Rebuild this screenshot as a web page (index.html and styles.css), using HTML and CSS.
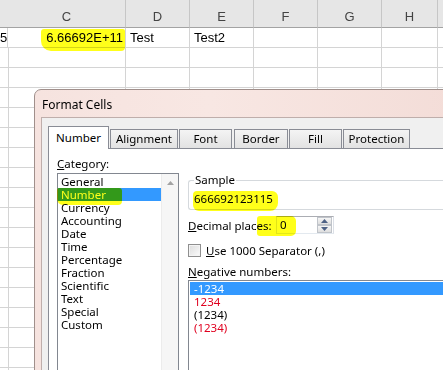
FILE: index.html
```html
<!DOCTYPE html>
<html lang="en">
<head>
  <meta charset="utf-8" />
  <title>Format Cells</title>
  <link rel="stylesheet" href="styles.css">
</head>
<body>
  <div class="sheet">
    <div class="c h"></div><div class="c h">C</div><div class="c h">D</div><div class="c h">E</div><div class="c h">F</div><div class="c h">G</div><div class="c h">H</div><div class="c h"></div>
    <div class="c num">5</div><div class="c num">6.66692E+11</div><div class="c">Test</div><div class="c">Test2</div><div class="c"></div><div class="c"></div><div class="c"></div><div class="c"></div>
    <!-- empty rows: only the column lines, the row lines come from the sheet background -->
    <div class="c fill"></div><div class="c fill"></div><div class="c fill"></div><div class="c fill"></div><div class="c fill"></div><div class="c fill"></div><div class="c fill"></div><div class="c fill"></div>
  </div>

  <div class="dialog">
    <div class="title">Format Cells</div>
    <div class="client">
      <div class="tabs">
        <div class="tab active t-number">Number</div>
        <div class="tab t-align">Alignment</div>
        <div class="tab t-font">Font</div>
        <div class="tab t-border">Border</div>
        <div class="tab t-fill">Fill</div>
        <div class="tab t-prot">Protection</div>
      </div>
      <div class="panel">
        <div class="left">
          <div class="lbl"><u>C</u>ategory:</div>
          <div class="list">
            <div class="items">
              <div class="item">General</div>
              <div class="item sel">Number</div>
              <div class="item">Currency</div>
              <div class="item">Accounting</div>
              <div class="item">Date</div>
              <div class="item">Time</div>
              <div class="item">Percentage</div>
              <div class="item">Fraction</div>
              <div class="item">Scientific</div>
              <div class="item">Text</div>
              <div class="item">Special</div>
              <div class="item">Custom</div>
            </div>
            <div class="scroll">
              <div class="sbtn"><svg width="7" height="4" viewBox="0 0 7 4"><path d="M0 4 L3.5 0 L7 4 Z" fill="#a3a3a3"/></svg></div>
            </div>
          </div>
        </div>
        <div class="right">
          <fieldset class="sample">
            <legend>Sample</legend>
            <div class="sample-val">666692123115</div>
          </fieldset>
          <div class="dec">
            <span class="dec-lbl"><u>D</u>ecimal places:</span>
            <div class="spin">
              <span class="spin-val">0</span>
              <div class="spin-btns">
                <div class="sb"><svg width="7" height="4" viewBox="0 0 7 4"><path d="M0 4 L3.5 0 L7 4 Z" fill="#4d6185"/></svg></div>
                <div class="sb"><svg width="7" height="4" viewBox="0 0 7 4"><path d="M0 0 L3.5 4 L7 0 Z" fill="#4d6185"/></svg></div>
              </div>
            </div>
          </div>
          <div class="check">
            <span class="box"></span>
            <span><u>U</u>se 1000 Separator (,)</span>
          </div>
          <div class="lbl neg-lbl"><u>N</u>egative numbers:</div>
          <div class="neglist">
            <div class="item sel">-1234</div>
            <div class="item red">1234</div>
            <div class="item">(1234)</div>
            <div class="item red">(1234)</div>
          </div>
        </div>
      </div>
    </div>
  </div>

  <div class="mark m-cell"></div>
  <div class="mark m-cat"></div>
  <div class="mark m-sample"></div>
  <div class="mark m-dec"></div>
</body>
</html>
```

FILE: styles.css
```css
* { box-sizing: border-box; }
body { margin: 0; width: 443px; height: 370px; overflow: hidden; position: relative; background: #fff; font-family: "Liberation Sans", Arial, sans-serif; }

/* spreadsheet behind the dialog */
.sheet { display: grid; grid-template-columns: 8px 118px 64px 64px 64px 64px 56px 60px; grid-template-rows: 28px 20px 330px; height: 378px; overflow: hidden;
  background-image: linear-gradient(#d4d4d4 1px, transparent 1px); background-size: 100% 20px; background-position: 0 7px; }
.c { border-right: 1px solid #d4d4d4; border-bottom: 1px solid #d4d4d4; font-size: 13px; line-height: 19px; padding: 0 4px; white-space: nowrap; overflow: hidden; background: #fff; }
.c.fill { background: transparent; border-bottom: 0; }
.h { background: #e6e6e6; border-right-color: #c6c6c6; border-bottom-color: #a3a3a3; text-align: center; padding-top: 7px; color: #444; }
.num { text-align: right; padding: 0 2px 0 0; }

/* dialog window */
.dialog { position: absolute; left: 34px; top: 89px; width: 440px; height: 300px; border: 1px solid #a08f8b; border-radius: 7px 7px 0 0;
  background: linear-gradient(90deg, #f6e3df, #f8e7e3 40%, #f3dcd7); font-family: "Noto Sans", sans-serif; font-size: 11.5px; color: #000; }
.title { height: 27px; padding-left: 7px; line-height: 29px; font-size: 12px; }
.client { margin-left: 6px; height: 280px; border-left: 1px solid #bfaeab; border-top: 1px solid #bfaeab; background: #f0f0f0; padding: 8px 0 0 6px; }

.tabs { display: flex; align-items: flex-end; gap: 1px; height: 22px; }
.tab { height: 19px; border: 1px solid #898c95; border-bottom: 0; background: linear-gradient(#f4f4f4, #e2e2e2); text-align: center; line-height: 18px; }
.tab.active { height: 23px; margin-bottom: -1px; background: #fff; position: relative; z-index: 1; line-height: 22px; }
.t-number { width: 61px; }
.t-align { width: 68px; }
.t-font { width: 53px; }
.t-border { width: 54px; margin-left: 1px; }
.t-fill { width: 53px; }
.t-prot { width: 67px; }

.panel { display: flex; height: 260px; border: 1px solid #898c95; background: #fff; padding-left: 8px; }
.lbl { line-height: 14px; }
.left { width: 122px; flex: none; padding-top: 8px; }
.left .lbl { margin-bottom: 2px; }

.list { display: flex; height: 220px; border: 1px solid #828790; }
.items { width: 103px; padding-top: 1px; }
.item { height: 13px; line-height: 13px; padding-left: 3px; white-space: nowrap; }
.item.sel { background: #3399ff; color: #fff; }
.scroll { width: 17px; background: #f6f6f6; border-left: 1px solid #ececec; }
.sbtn { height: 17px; display: flex; align-items: center; justify-content: center; }

.right { flex: 1; margin-left: 9px; }
.sample { margin: 24px 0 0; min-width: 0; padding: 5px 5px 3px; border: 1px solid #d5d9dd; border-radius: 3px; border-right: 0; }
.sample legend { padding: 0 1px; line-height: 14px; }
.sample-val { line-height: 14px; }

.dec { display: flex; align-items: center; margin-top: 6px; height: 18px; }
.dec-lbl { width: 88px; }
.spin { display: flex; width: 58px; height: 18px; border: 1px solid #abadb3; border-color: #abadb3 #dbdfe6 #e3e9ef #e2e3ea; }
.spin-val { flex: 1; padding-left: 3px; line-height: 16px; }
.spin-btns { width: 15px; display: flex; flex-direction: column; margin: 0 1px 0 0; }
.sb { flex: 1; display: flex; align-items: center; justify-content: center; border: 1px solid #c0c4ca; background: linear-gradient(#f6f6f6, #dedede); }

.check { display: flex; align-items: center; gap: 5px; margin-top: 10px; height: 13px; }
.box { width: 13px; height: 13px; border: 1px solid #8f8f8f; background: linear-gradient(135deg, #dcdcdc, #fbfbfb); box-shadow: inset 0 0 0 1px #f4f4f4; }

.neg-lbl { margin-top: 8px; }
.neglist { margin-top: 1px; height: 120px; border: 1px solid #828790; border-right: 0; padding: 1px 0 0 1px; }
.neglist .item { padding-left: 4px; }
.red { color: #e0001f; }

/* yellow highlighter strokes drawn over the screenshot */
.mark { position: absolute; background: #ffff1a; mix-blend-mode: multiply; }
.m-cell { left: 41px; top: 29px; width: 84px; height: 22px; border-radius: 3px 2px 4px 10px; }
.m-cat { left: 57px; top: 188px; width: 65px; height: 17px; border-radius: 2px 3px 4px 6px; }
.m-sample { left: 193px; top: 191px; width: 85px; height: 20px; border-radius: 4px 6px 8px 6px; }
.m-dec { left: 257px; top: 216px; width: 39px; height: 20px; border-radius: 3px 5px 5px 3px; }
```
